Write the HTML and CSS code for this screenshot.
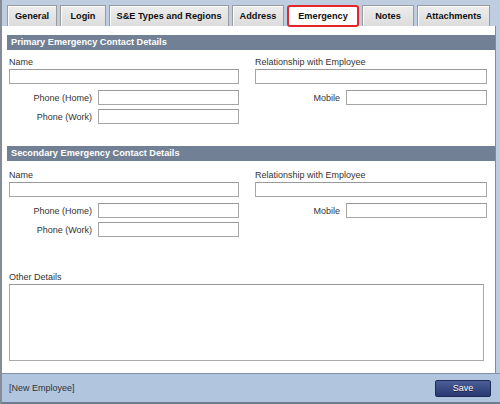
FILE: index.html
```html
<!DOCTYPE html>
<html>
<head>
<meta charset="utf-8">
<link rel="stylesheet" href="styles.css">
</head>
<body>
<div class="window">
  <div class="tabs">
    <div class="tab tab-general">General</div>
    <div class="tab tab-login">Login</div>
    <div class="tab tab-se">S&amp;E Types and Regions</div>
    <div class="tab tab-address">Address</div>
    <div class="tab tab-emergency active">Emergency</div>
    <div class="tab tab-notes">Notes</div>
    <div class="tab tab-attach">Attachments</div>
  </div>
  <div class="content">
    <div class="section">
      <div class="section-head">Primary Emergency Contact Details</div>
      <div class="cols">
        <div class="col">
          <label class="lbl">Name</label>
          <input class="field" type="text">
          <div class="pair"><span class="plbl">Phone (Home)</span><input class="field" type="text"></div>
          <div class="pair pair-next"><span class="plbl">Phone (Work)</span><input class="field" type="text"></div>
        </div>
        <div class="col">
          <label class="lbl">Relationship with Employee</label>
          <input class="field" type="text">
          <div class="pair"><span class="plbl">Mobile</span><input class="field" type="text"></div>
        </div>
      </div>
    </div>
    <div class="section section-second">
      <div class="section-head">Secondary Emergency Contact Details</div>
      <div class="cols cols-second">
        <div class="col">
          <label class="lbl">Name</label>
          <input class="field" type="text">
          <div class="pair"><span class="plbl">Phone (Home)</span><input class="field" type="text"></div>
          <div class="pair pair-next"><span class="plbl">Phone (Work)</span><input class="field" type="text"></div>
        </div>
        <div class="col">
          <label class="lbl">Relationship with Employee</label>
          <input class="field" type="text">
          <div class="pair"><span class="plbl">Mobile</span><input class="field" type="text"></div>
        </div>
      </div>
    </div>
    <div class="other">
      <label class="lbl">Other Details</label>
      <textarea class="area"></textarea>
    </div>
  </div>
  <div class="footer">
    <span class="status">[New Employee]</span>
    <button class="save" type="button">Save</button>
  </div>
</div>
</body>
</html>
```
FILE: styles.css
```css
* { box-sizing: border-box; }
body {
  margin: 0;
  font-family: "Liberation Sans", Arial, sans-serif;
}
.window {
  width: 500px;
  height: 404px;
  background: #bfcde0;
  border-left: 2px solid #858c96;
  display: flex;
  flex-direction: column;
  overflow: hidden;
}
.tabs {
  display: flex;
  align-items: flex-start;
  gap: 3px;
  height: 26px;
  flex: none;
  padding: 5px 0 0 5px;
}
.tab {
  height: 21px;
  background: linear-gradient(#ededed, #dcdcdc);
  border: 1px solid #9b9b9b;
  border-bottom: none;
  box-shadow: inset 1px 1px 0 #fafafa;
  display: flex;
  align-items: center;
  justify-content: center;
  font-weight: bold;
  font-size: 9.2px;
  color: #111;
  white-space: nowrap;
}
.tab-general { width: 50px; }
.tab-login { width: 46px; }
.tab-se { width: 120px; }
.tab-address { width: 52px; }
.tab-emergency { width: 72px; }
.tab-notes { width: 52px; }
.tab-attach { width: 73px; }
.tab.active {
  position: relative;
  z-index: 1;
  height: 22px;
  background: #fff;
  border: 2px solid #e3262b;
  border-radius: 3px;
  box-shadow: none;
}
.content {
  flex: 1;
  background: #fff;
  margin-right: 4px;
  border-right: 1px solid #8a8a8a;
  padding-top: 9px;
}
.section-head {
  margin-left: 5px;
  height: 15px;
  line-height: 15px;
  background: #718094;
  color: #fff;
  font-weight: bold;
  font-size: 9.2px;
  padding-left: 4px;
}
.section-second { margin-top: 22px; }
.cols {
  display: grid;
  grid-template-columns: 230px 232px;
  column-gap: 16px;
  padding-left: 7px;
  margin-top: 6px;
}
.cols-second { margin-top: 8px; }
.lbl {
  display: block;
  font-size: 9px;
  line-height: 12px;
  height: 12px;
  margin-bottom: 1px;
  color: #333;
}
.field {
  display: block;
  width: 100%;
  height: 15px;
  margin: 0;
  padding: 0;
  border: 1px solid #a6a6a6;
  border-top-color: #999;
  background: #fff;
}
.pair {
  display: grid;
  grid-template-columns: 1fr 141px;
  column-gap: 6px;
  align-items: center;
  margin-top: 6px;
}
.pair-next { margin-top: 4px; }
.plbl {
  text-align: right;
  font-size: 9px;
  color: #333;
  white-space: nowrap;
}
.other {
  margin-top: 34px;
  padding-left: 7px;
}
.area {
  display: block;
  width: 475px;
  height: 77px;
  margin: 0;
  padding: 0;
  resize: none;
  border: 1px solid #aaa;
  border-top-color: #999;
}
.footer {
  height: 31px;
  flex: none;
  background: #b2c5de;
  border-top: 1px solid #7f90a8;
  border-bottom: 2px solid #6f7d92;
  display: flex;
  align-items: center;
  justify-content: space-between;
  padding: 0 9px 0 7px;
}
.status {
  font-size: 9px;
  color: #333;
}
.save {
  width: 56px;
  height: 17px;
  margin: 0;
  padding: 0;
  background: linear-gradient(#4b5e97, #2a3970);
  border: 1px solid #1f2a55;
  border-radius: 2px;
  color: #fff;
  font-family: "Liberation Sans", Arial, sans-serif;
  font-size: 9px;
  text-shadow: 0 1px 0 #1a2040;
}
```
